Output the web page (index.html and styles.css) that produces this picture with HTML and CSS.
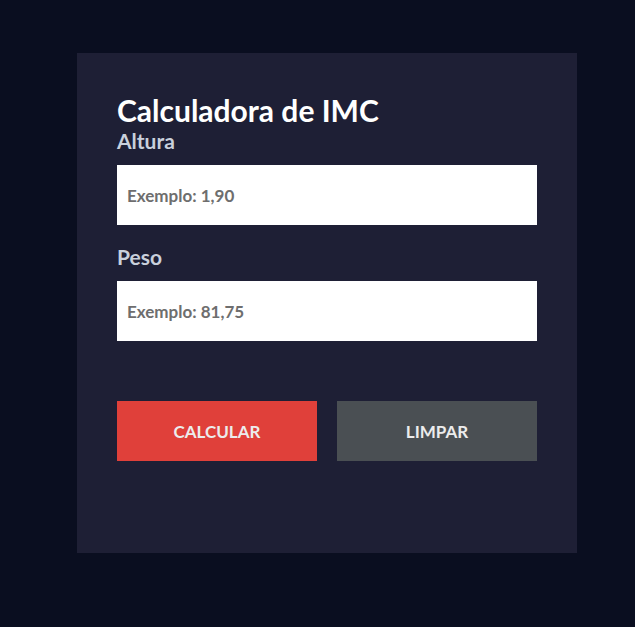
FILE: index.html
```html
<!DOCTYPE html>
<html lang="pt-BR">
  <head>
    <meta charset="UTF-8" />
    <meta name="viewport" content="width=device-width, initial-scale=1.0" />
    <title>Calculadora de IMC</title>
    <link rel="stylesheet" href="styles.css">
  </head>
  <body>
    <main class="card">
      <h1>Calculadora de IMC</h1>
      <form id="imc-form">
        <label for="altura">Altura</label>
        <input type="text" id="altura" placeholder="Exemplo: 1,90" />

        <label for="peso">Peso</label>
        <input type="text" id="peso" placeholder="Exemplo: 81,75" />

        <div class="actions">
          <button type="submit" class="btn btn-calc">Calcular</button>
          <button type="reset" class="btn btn-clear">Limpar</button>
        </div>
      </form>
    </main>
  </body>
</html>
```

FILE: styles.css
```css
* {
  box-sizing: border-box;
}

body {
  font-family: "Lato", "Open Sans", sans-serif;
  margin: 0;
  padding: 53px 0 0 77px;
  background-color: #0a0e20;
  min-height: 100vh;
}

/* Card */
.card {
  width: 500px;
  height: 500px;
  padding: 40px;
  background-color: #1e1f35;
}

h1 {
  margin: 0;
  font-size: 30px;
  line-height: 34px;
  font-weight: 700;
  color: #fff;
}

/* Form */
label {
  display: block;
  padding-top: 2px;
  font-size: 21px;
  line-height: 24px;
  font-weight: 700;
  color: #c9d0dc;
  margin-bottom: 12px;
}

input {
  display: block;
  width: 420px;
  height: 60px;
  padding: 0 10px;
  margin: 0 0 18px;
  border: none;
  outline: none;
  background-color: #fff;
  font-family: inherit;
  font-size: 17px;
  font-weight: 700;
  color: #333;
}

input::placeholder {
  color: #6e6e6e;
}

.actions {
  display: flex;
  gap: 20px;
  margin-top: 60px;
}

.btn {
  width: 200px;
  height: 60px;
  border: none;
  font-family: inherit;
  font-size: 17px;
  font-weight: 700;
  text-transform: uppercase;
  color: #ececec;
  cursor: pointer;
}

.btn-calc {
  background-color: #e0403a;
}

.btn-clear {
  background-color: #4a4f53;
}
```
